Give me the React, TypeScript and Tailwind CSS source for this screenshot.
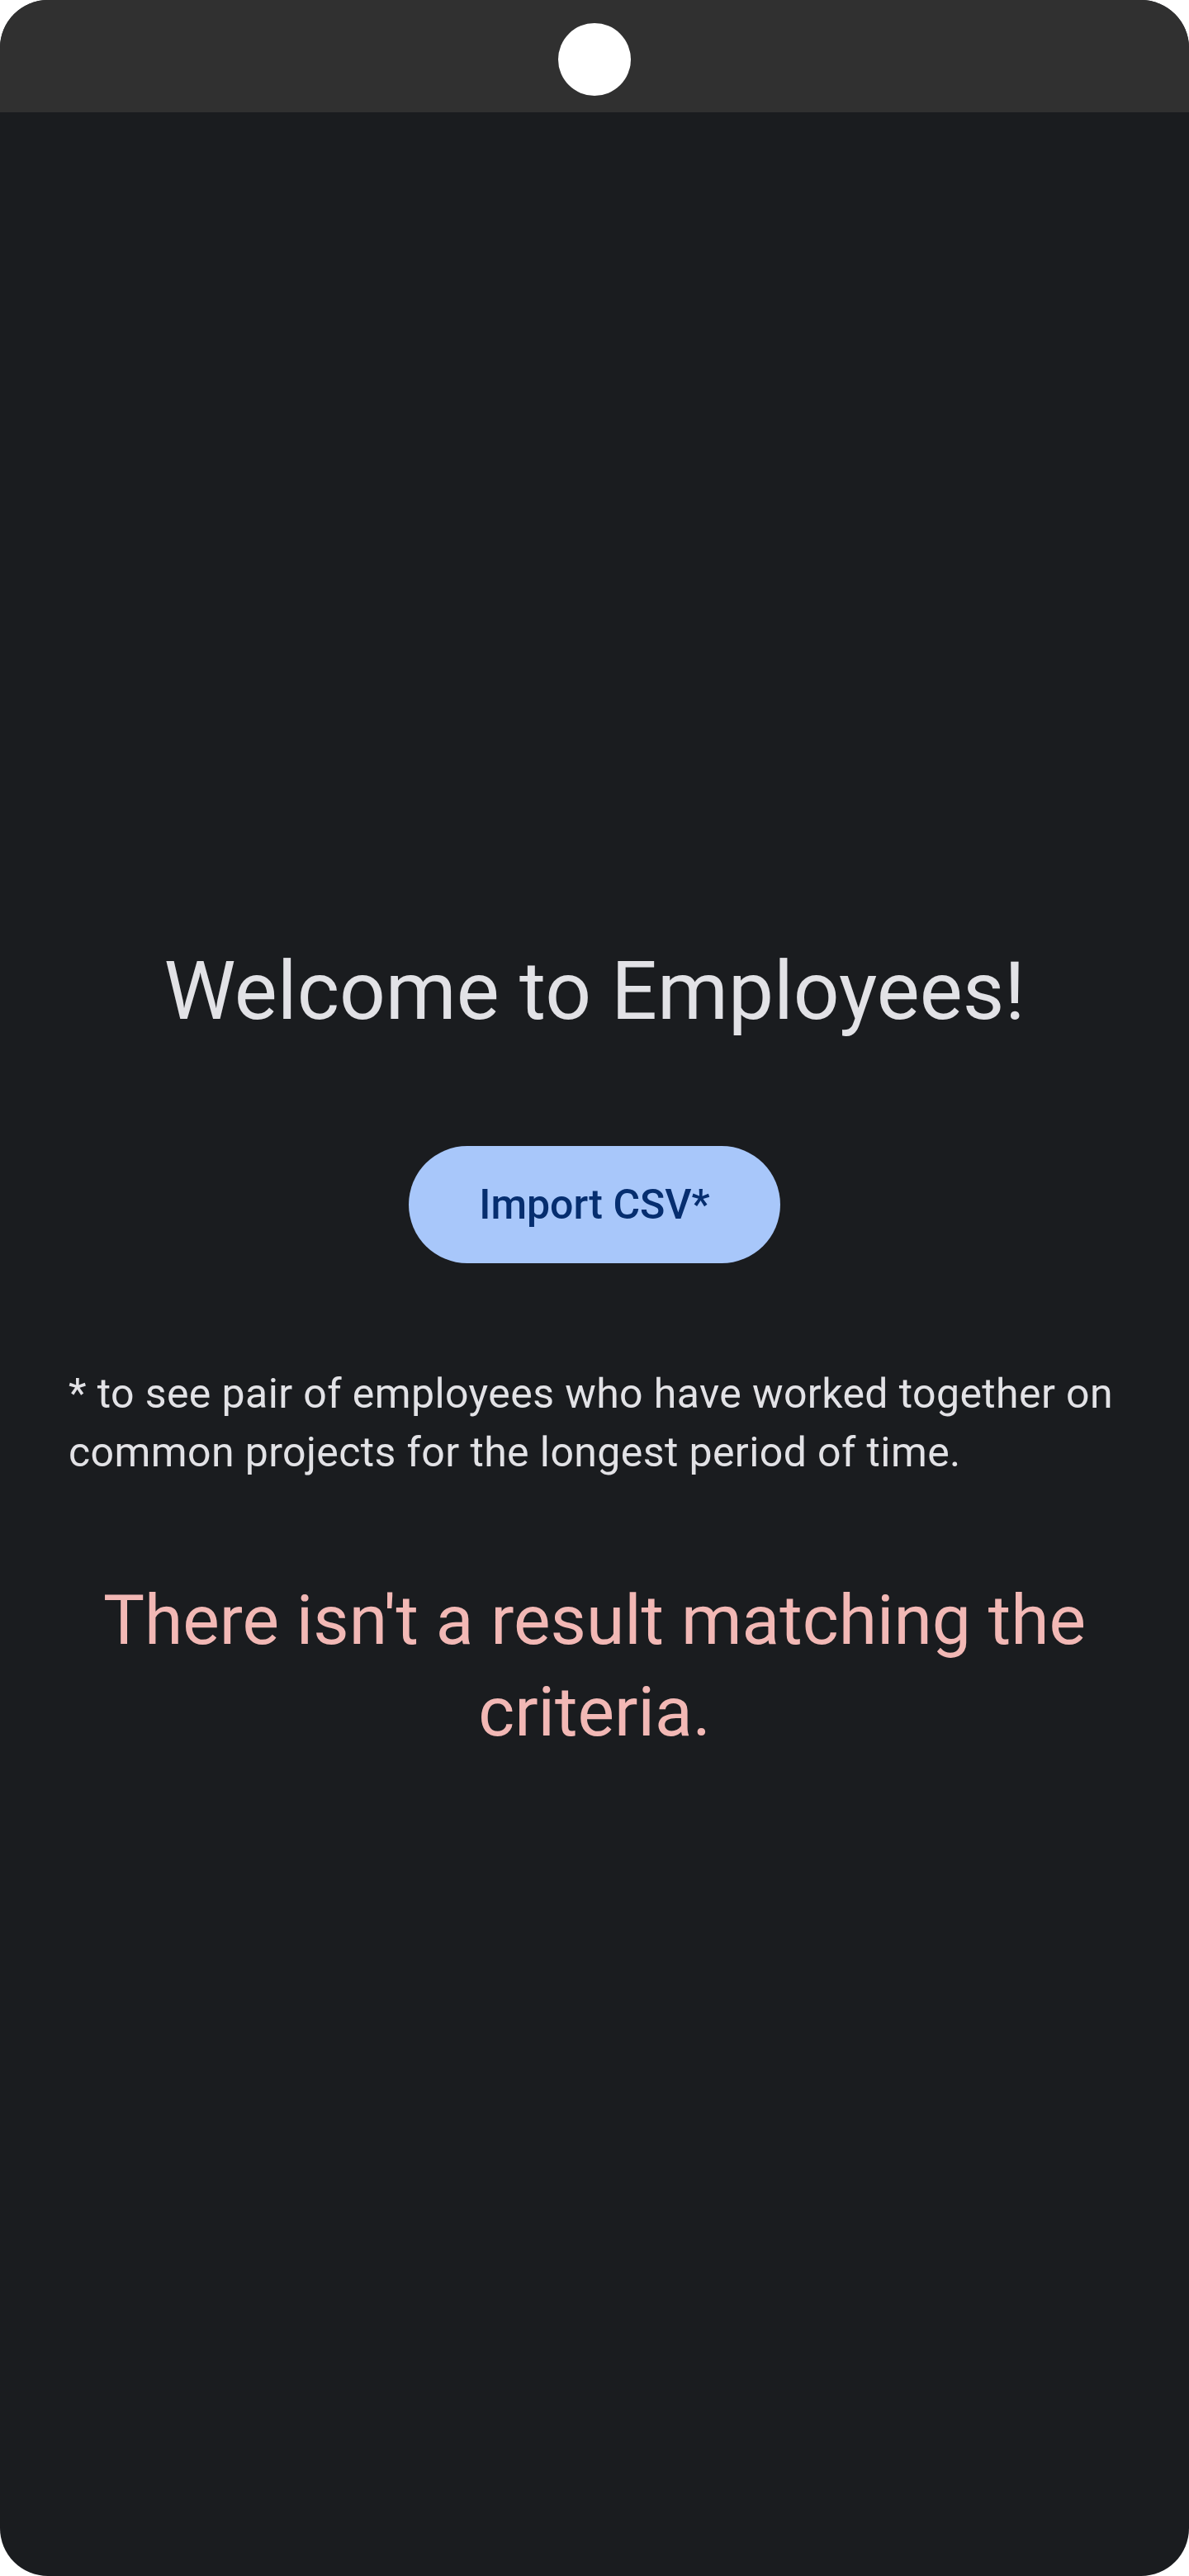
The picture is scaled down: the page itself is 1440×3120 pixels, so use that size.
export default function App() {
  return (
    <div className="w-[1440px] h-[3120px] bg-white" style={{ fontFamily: "Roboto, 'Noto Sans', sans-serif" }}>
      <div className="w-full h-full rounded-[58px] overflow-hidden bg-[#1a1c1f] flex flex-col">
        {/* top bar with camera hole */}
        <div className="h-[136px] bg-[#303030] flex justify-center pt-[28px] shrink-0">
          <div className="w-[88px] h-[88px] rounded-full bg-white" />
        </div>

        <main className="flex flex-col items-center px-[83px]">
          <h1 className="mt-[1006px] text-[98px] leading-[118px] text-[#e2e2e6] font-normal whitespace-nowrap">
            Welcome to Employees!
          </h1>

          <button className="mt-[128px] w-[450px] h-[142px] rounded-full bg-[#a8c7fa] text-[#062e6f] text-[50px] font-medium">
            Import CSV*
          </button>

          <p className="mt-[123px] self-stretch text-[50px] leading-[71px] text-[#e2e2e6] tracking-[0.4px]">
            * to see pair of employees who have worked together on common projects for the longest period of time.
          </p>

          <p className="mt-[112px] self-stretch text-center text-[84px] leading-[111px] text-[#f2b8b5]">
            There isn't a result matching the criteria.
          </p>
        </main>
      </div>
    </div>
  );
}
